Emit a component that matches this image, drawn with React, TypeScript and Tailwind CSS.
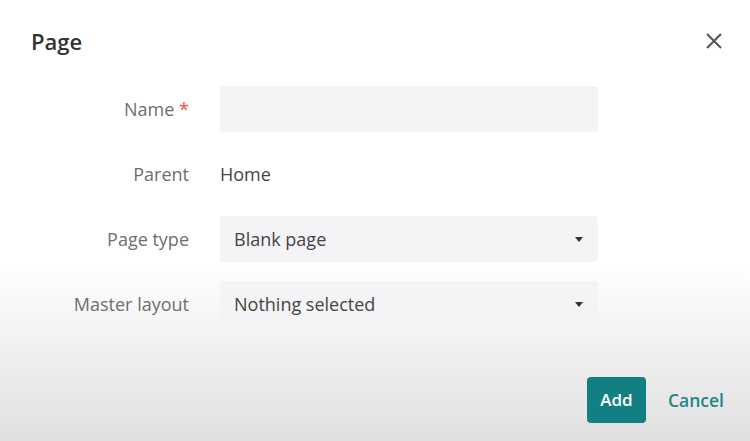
import React from 'react'

const Caret: React.FC = () => (
  <svg width="8" height="5" viewBox="0 0 8 5" className="shrink-0">
    <path d="M0 0h8L4 5z" fill="#333" />
  </svg>
)

const Label: React.FC<{ children: React.ReactNode }> = ({ children }) => (
  <div className="w-[189px] shrink-0 text-right text-[18px] text-[#6e6e6e]">{children}</div>
)

const SelectBox: React.FC<{ value: string }> = ({ value }) => (
  <div className="flex h-[46px] w-[378px] items-center justify-between rounded-[3px] bg-[#f4f4f6] pl-[14px] pr-[15px] text-[18px] text-[#444]">
    <span>{value}</span>
    <Caret />
  </div>
)

export default function App() {
  return (
    <div
      className="flex h-[441px] w-[750px] flex-col bg-gradient-to-b from-white from-60% to-[#e0e0e0]"
      style={{ fontFamily: '"Open Sans", "Liberation Sans", sans-serif' }}
    >
      <div className="flex items-center justify-between pl-[31px] pr-[27px] pt-[26px]">
        <h1 className="text-[22px] font-semibold leading-[30px] text-[#333]">Page</h1>
        <button className="text-[#555]">
          <svg width="18" height="18" viewBox="0 0 18 18">
            <path d="M2 2l14 14M16 2L2 16" stroke="currentColor" strokeWidth="2" />
          </svg>
        </button>
      </div>

      <div className="mt-[30px] flex flex-col gap-[19px]">
        <div className="flex items-center gap-[31px]">
          <Label>
            Name <span className="text-[#e5533d]">*</span>
          </Label>
          <div className="h-[46px] w-[378px] rounded-[3px] bg-[#f4f4f6]" />
        </div>
        <div className="flex h-[46px] items-center gap-[31px]">
          <Label>Parent</Label>
          <span className="text-[18px] text-[#444]">Home</span>
        </div>
        <div className="flex items-center gap-[31px]">
          <Label>Page type</Label>
          <SelectBox value="Blank page" />
        </div>
        <div className="flex items-center gap-[31px]">
          <Label>Master layout</Label>
          <SelectBox value="Nothing selected" />
        </div>
      </div>

      <div className="mt-[50px] flex items-center justify-end gap-[22px] pr-[26px]">
        <button className="h-[46px] w-[59px] rounded-[4px] bg-[#128083] text-[17px] font-semibold text-white">
          Add
        </button>
        <button className="text-[17.5px] font-semibold text-[#1f8589]">Cancel</button>
      </div>
    </div>
  )
}
